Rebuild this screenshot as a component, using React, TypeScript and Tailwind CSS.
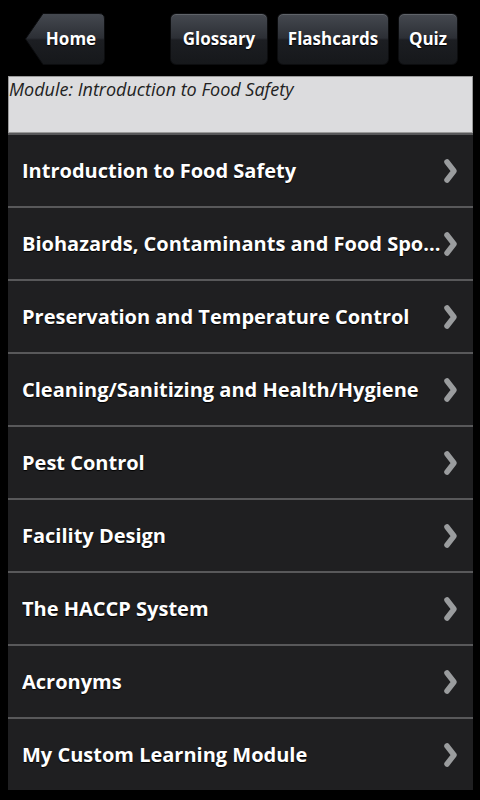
import React from "react";

const modules = [
   "Introduction to Food Safety",
   "Biohazards, Contaminants and Food Spo...",
   "Preservation and Temperature Control",
   "Cleaning/Sanitizing and Health/Hygiene",
   "Pest Control",
   "Facility Design",
   "The HACCP System",
   "Acronyms",
   "My Custom Learning Module",
];

const btn =
   "h-[52px] rounded-[6px] border border-[#0c0d0f] bg-[linear-gradient(to_bottom,#454950_0%,#2c2f35_48%,#1c1e22_52%,#16181b_100%)] text-white font-bold text-[17px] flex items-center justify-center shadow-[inset_0_1px_0_rgba(255,255,255,0.15)] [text-shadow:0_1px_1px_#000]";

const Chevron = () => (
   <svg width="16" height="26" viewBox="0 0 16 26" className="shrink-0">
      <polyline
         points="4,4 11,13 4,22"
         fill="none"
         stroke="#9a9c9e"
         strokeWidth="5.5"
         strokeLinecap="round"
         strokeLinejoin="round"
      />
   </svg>
);

export default function App() {
   return (
      <div className="w-[480px] h-[800px] bg-black overflow-hidden" style={{ fontFamily: "'Open Sans', 'DejaVu Sans', sans-serif" }}>
         <div className="h-[76px] flex items-center pt-[1px]">
            <div className="ml-[25px] relative w-[80px] h-[52px]">
               <svg width="80" height="52" viewBox="0 0 80 52" className="absolute inset-0">
                  <defs>
                     <linearGradient id="hg" x1="0" y1="0" x2="0" y2="1">
                        <stop offset="0%" stopColor="#454950" />
                        <stop offset="48%" stopColor="#2c2f35" />
                        <stop offset="52%" stopColor="#1c1e22" />
                        <stop offset="100%" stopColor="#16181b" />
                     </linearGradient>
                  </defs>
                  <path d="M18 0.5 H74 Q79.5 0.5 79.5 6 V46 Q79.5 51.5 74 51.5 H18 L0.5 26 Z" fill="url(#hg)" stroke="#0c0d0f" />
               </svg>
               <span className="absolute inset-0 flex items-center justify-center pl-[12px] text-white font-bold text-[17px] [text-shadow:0_1px_1px_#000]">
                  Home
               </span>
            </div>
            <div className="ml-auto flex gap-[9px] mr-[22px]">
               <div className={`${btn} w-[98px]`}>Glossary</div>
               <div className={`${btn} w-[112px]`}>Flashcards</div>
               <div className={`${btn} w-[60px]`}>Quiz</div>
            </div>
         </div>
         <div className="mx-[8px] w-[465px] h-[57px] bg-[#dcdcde] border border-[#9a9a9a] text-[#222] italic text-[18px] leading-[22px] px-0 pt-[1px]">
            Module: Introduction to Food Safety
         </div>
         <div className="mx-[8px] w-[465px]">
            {modules.map((m) => (
               <div
                  key={m}
                  className="h-[73px] bg-[#1f1f21] border-t-[2px] border-[#58585a] flex items-center pl-[14px] pr-[14px]"
               >
                  <span className="flex-1 whitespace-nowrap overflow-hidden text-white font-bold text-[20px] [text-shadow:0_1px_1px_#000]">
                     {m}
                  </span>
                  <Chevron />
               </div>
            ))}
         </div>
      </div>
   );
}
